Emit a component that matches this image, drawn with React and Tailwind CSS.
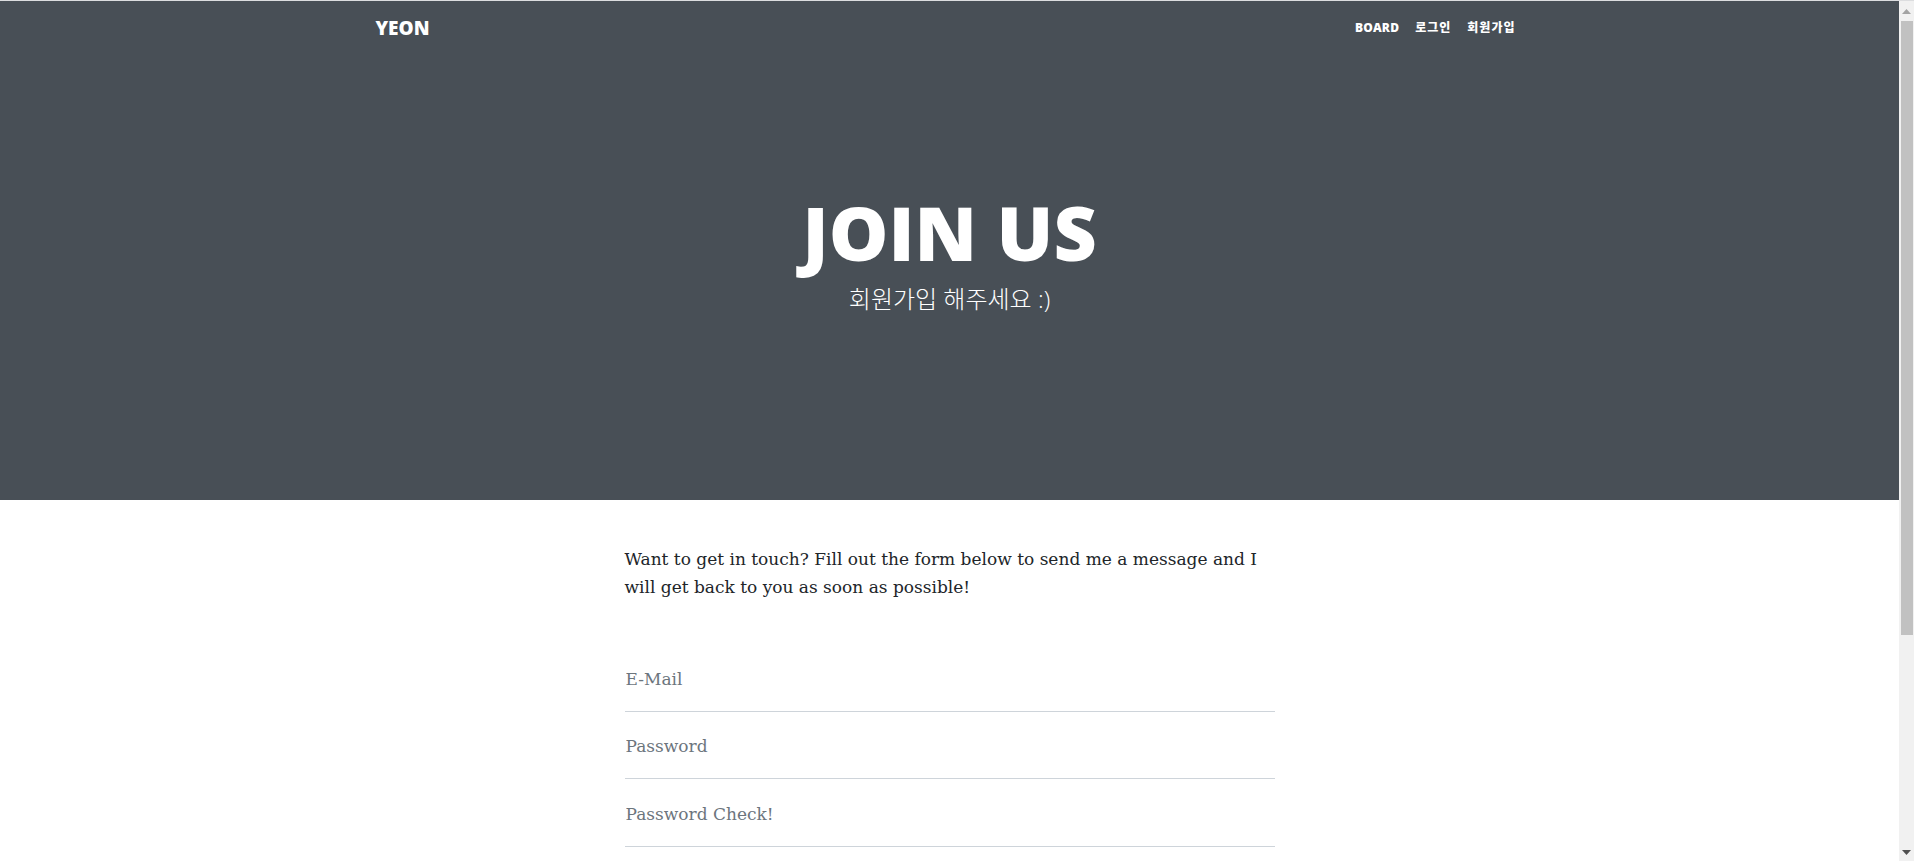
import React from 'react';

const navLinks = [
  { label: 'Board', tracking: 'tracking-[0.2px]' },
  { label: '로그인', tracking: 'tracking-[1px]' },
  { label: '회원가입', tracking: 'tracking-[1px]' },
];

const fields = [
  { type: 'email', placeholder: 'E-Mail' },
  { type: 'password', placeholder: 'Password' },
  { type: 'password', placeholder: 'Password Check!' },
];

const Scrollbar = () => (
  <div className="w-[15px] shrink-0 bg-[#f1f1f1] flex flex-col">
    <div className="h-[20px] flex items-center justify-center">
      <svg width="9" height="5" viewBox="0 0 9 5">
        <polygon points="4.5,0 9,5 0,5" fill="#a3a3a3" />
      </svg>
    </div>
    <div className="ml-[2px] mr-[1px] h-[614px] bg-[#c1c1c1]" />
    <div className="flex-1" />
    <div className="h-[17px] flex items-center justify-center">
      <svg width="9" height="5" viewBox="0 0 9 5">
        <polygon points="0,0 9,0 4.5,5" fill="#505050" />
      </svg>
    </div>
  </div>
);

const App = () => {
  return (
    <div className="h-screen flex flex-col overflow-hidden bg-white">
      <div className="h-px bg-[#dcdddf] shrink-0" />
      <div className="flex flex-1 min-h-0">
        <div className="flex-1 min-w-0 overflow-hidden">
          {/* masthead */}
          <header className="h-[499px] bg-[#484f56] text-white">
            <nav className="w-[1148px] mx-auto h-[54px] flex items-center justify-between">
              <a href="#" className="text-[19px] font-extrabold leading-none" style={{ fontFamily: '"Open Sans", sans-serif' }}>
                YEON
              </a>
              <ul className="flex items-center">
                {navLinks.map((link, index) => (
                  <li key={index}>
                    <a
                      href="#"
                      className={`block px-2 text-[12px] font-extrabold uppercase leading-none ${link.tracking}`}
                      style={{ fontFamily: '"Open Sans", "Noto Sans CJK KR", sans-serif' }}
                    >
                      {link.label}
                    </a>
                  </li>
                ))}
              </ul>
            </nav>
            <div className="pt-[140px] text-center" style={{ fontFamily: '"Open Sans", "Noto Sans CJK KR", sans-serif' }}>
              <h1 className="text-[75px] font-extrabold leading-none">JOIN US</h1>
              <span className="block mt-[14px] text-[24px] font-light leading-[29px]">회원가입 해주세요 :)</span>
            </div>
          </header>

          {/* form */}
          <div className="w-[650px] mx-auto pt-[46px]" style={{ fontFamily: '"DejaVu Serif", serif' }}>
            <p className="text-[17px] leading-[27.5px] text-[#212529]">
              Want to get in touch? Fill out the form below to send me a message and I will get back to you as soon as possible!
            </p>
            <form className="mt-[43px]">
              {fields.map((field, index) => (
                <div key={index} className="h-[67.5px] border-b border-[#ced4da] flex items-end pb-[17px]">
                  <input
                    type={field.type}
                    placeholder={field.placeholder}
                    className="block w-full h-[30px] px-[1px] text-[17px] text-[#495057] placeholder:text-[#6c757d] outline-none bg-transparent"
                  />
                </div>
              ))}
            </form>
          </div>
        </div>
        <Scrollbar />
      </div>
    </div>
  );
};

export default App;
